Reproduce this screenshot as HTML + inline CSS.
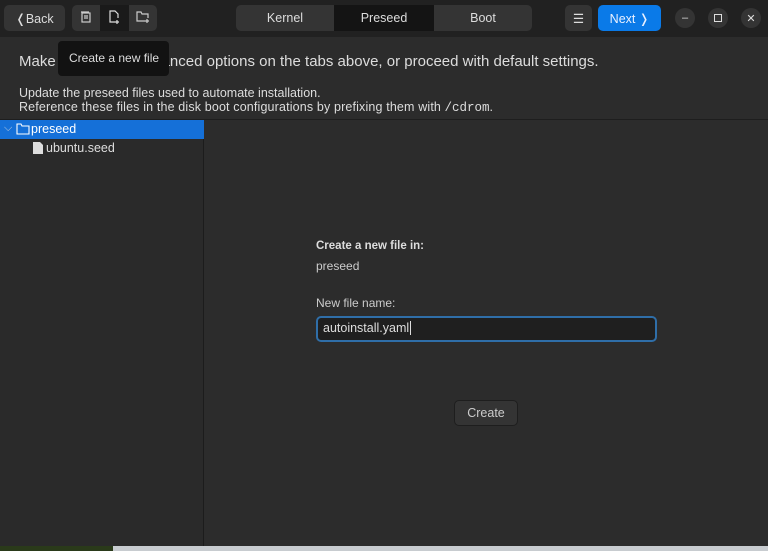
<!DOCTYPE html>
<html><head><style>
*{box-sizing:border-box;margin:0;padding:0}
body{width:768px;height:551px;background:#3a4a5a;font-family:"Liberation Sans",sans-serif;color:#ddd;position:relative;overflow:hidden}
.win{position:absolute;left:0;top:0;width:768px;height:546px;background:#2c2c2c}
.hdr{position:absolute;left:0;top:0;width:768px;height:37px;background:#212121}
.btn{position:absolute;top:5px;height:26px;background:#343434;border-radius:5px;color:#ddd;font-size:12.5px;display:flex;align-items:center;justify-content:center}
.tab{position:absolute;top:5px;height:26px;font-size:12.5px;display:flex;align-items:center;justify-content:center;color:#ddd}
.circ{position:absolute;top:8px;width:20px;height:20px;border-radius:10px;background:#343434;color:#ddd;font-size:11px;display:flex;align-items:center;justify-content:center}
.t{position:absolute;white-space:nowrap}
</style></head><body>
<div class="win">
<div class="hdr">
 <div class="btn" style="left:4px;width:61px">❬Back</div>
 <div class="btn" style="left:72px;width:85px;background:#343434"></div>
 <div class="btn" style="left:100px;width:29px;background:#1a1a1a;border-radius:0"></div>
 <svg style="position:absolute;left:80px;top:11px" width="12" height="12" viewBox="0 0 12 12" fill="none" stroke="#ccc" stroke-width="1.2"><rect x="2" y="2" width="8" height="9"/><path d="M4 5h4M4 7h4M1 1h8"/></svg>
 <svg style="position:absolute;left:108px;top:10px" width="13" height="14" viewBox="0 0 13 14" fill="none" stroke="#ddd" stroke-width="1.2"><path d="M8 12H2V1h5l3 3v4M9 10v4M7 12h4"/></svg>
 <svg style="position:absolute;left:136px;top:10px" width="15" height="13" viewBox="0 0 15 13" fill="none" stroke="#ccc" stroke-width="1.2"><path d="M9 11H1V2h4l1 2h6v4M11 9v4M9 11h4"/></svg>
 <div class="tab" style="left:236px;width:98px;background:#343434;border-radius:5px 0 0 5px">Kernel</div>
 <div class="tab" style="left:334px;width:100px;background:#141414">Preseed</div>
 <div class="tab" style="left:434px;width:98px;background:#343434;border-radius:0 5px 5px 0">Boot</div>
 <div class="btn" style="left:565px;width:27px">☰</div>
 <div class="btn" style="left:598px;width:63px;background:#0a7ae8;color:#e8f0ff">Next ❭</div>
 <div class="circ" style="left:675px">–</div>
 <div class="circ" style="left:708px"><span style="display:block;width:8px;height:8px;border:1.5px solid #ddd"></span></div>
 <div class="circ" style="left:741px">✕</div>
</div>
<div class="t" style="left:19px;top:53px;font-size:15px;color:#ddd">Make changes to advanced options on the tabs above, or proceed with default settings.</div>
<div style="position:absolute;left:58px;top:41px;width:111px;height:35px;background:#121212;border-radius:4px"></div>
<div class="t" style="left:69px;top:51px;font-size:12px;color:#ddd">Create a new file</div>
<div class="t" style="left:19px;top:86px;font-size:12.5px;color:#ddd;line-height:14px">Update the preseed files used to automate installation.<br><span style="letter-spacing:0.15px">Reference these files in the disk boot configurations by prefixing them with</span> <span style="font-family:'Liberation Mono',monospace">/cdrom</span>.</div>
<div style="position:absolute;left:0;top:119px;width:768px;height:1px;background:#1e1e1e"></div>
<div style="position:absolute;left:0;top:120px;width:204px;height:426px;background:#2a2a2a;border-right:1px solid #1c1c1c"></div>
<div style="position:absolute;left:0;top:120px;width:204px;height:19px;background:#1570d8"></div>
<div class="t" style="left:4px;top:122px;font-size:11px;color:#bcd">⌵</div>
<svg style="position:absolute;left:16px;top:123px" width="14" height="12" viewBox="0 0 14 12" fill="none" stroke="#fff" stroke-width="1.1"><path d="M1 1h4l1 2h7v8H1z"/></svg>
<div class="t" style="left:31px;top:122px;font-size:12.5px;color:#fff">preseed</div>
<svg style="position:absolute;left:33px;top:142px" width="10" height="12" viewBox="0 0 10 12"><path d="M0 0h7l3 3v9H0z" fill="#ddd"/></svg>
<div class="t" style="left:46px;top:141px;font-size:12.5px;color:#ddd">ubuntu.seed</div>
<div class="t" style="left:316px;top:240px;font-size:11.5px;font-weight:bold;color:#ddd">Create a new file in:</div>
<div class="t" style="left:316px;top:259px;font-size:12px;color:#ccc">preseed</div>
<div class="t" style="left:316px;top:296px;font-size:12px;color:#ccc">New file name:</div>
<div style="position:absolute;left:316px;top:316px;width:341px;height:26px;background:#1f1f1f;border:2px solid #2f6ea8;border-radius:5px"></div>
<div class="t" style="left:323px;top:321px;font-size:12.5px;color:#ddd">autoinstall.yaml<span style="border-left:1px solid #ddd;margin-left:1px"></span></div>
<div style="position:absolute;left:454px;top:400px;width:64px;height:26px;background:#343434;border:1px solid #1e1e1e;border-radius:5px;font-size:12.5px;display:flex;align-items:center;justify-content:center;color:#ccc">Create</div>
</div>
<div style="position:absolute;left:0;top:546px;width:113px;height:5px;background:#2a3a1a"></div>
<div style="position:absolute;left:113px;top:546px;width:655px;height:5px;background:#c8ccd0"></div>
</body></html>
